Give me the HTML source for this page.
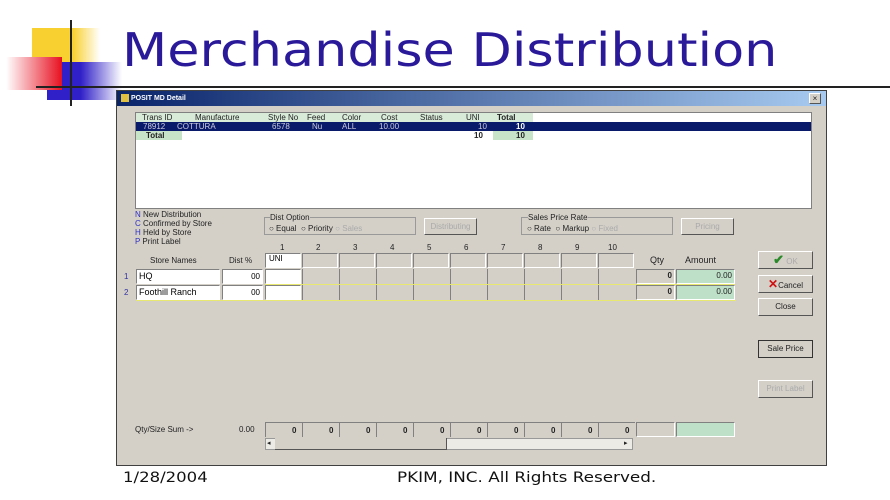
<!DOCTYPE html>
<html><head><meta charset="utf-8"><style>
*{margin:0;padding:0;box-sizing:border-box}
body{width:890px;height:500px;background:#fff;position:relative;overflow:hidden;font-family:"Liberation Sans",sans-serif}
.a{position:absolute}
.t{position:absolute;font-size:8px;color:#222;white-space:nowrap;line-height:9px}
.cell{position:absolute;border-top:1px solid #808080;border-left:1px solid #808080;border-right:1px solid #fff;border-bottom:1px solid #fff;background:#d4d0c8}
.btn{position:absolute;border:1px solid #fff;border-right-color:#555;border-bottom-color:#555;background:#d4d0c8;font-size:8px;text-align:center;line-height:16px;color:#222}
.r{text-align:right;padding-right:2px;font-size:8px;line-height:12px;font-weight:bold;color:#222}
</style></head><body>
<!-- logo -->
<div class="a" style="left:32px;top:28px;width:68px;height:35px;background:linear-gradient(90deg,#f8d030 60%,#fff)"></div>
<div class="a" style="left:47px;top:62px;width:75px;height:38px;background:linear-gradient(90deg,#3020c8 45%,#fff)"></div>
<div class="a" style="left:0;top:57px;width:62px;height:33px;background:linear-gradient(270deg,#e81020,#fff 90%)"></div>
<div class="a" style="left:70px;top:20px;width:2px;height:86px;background:#222"></div>
<div class="a" style="left:36px;top:86px;width:854px;height:2px;background:#222"></div>
<div class="a" style="left:122px;top:22px;font-size:46px;color:#2a1a9a;font-family:'DejaVu Sans',sans-serif;line-height:56px;white-space:nowrap;transform:scaleX(1.14);transform-origin:0 0">Merchandise Distribution</div>
<!-- window -->
<div class="a" style="left:116px;top:90px;width:711px;height:376px;background:#d4d0c8;border:1px solid #404040"></div>
<div class="a" style="left:117px;top:91px;width:709px;height:15px;background:linear-gradient(90deg,#0a246a,#a6caf0)"></div>
<div class="a" style="left:121px;top:94px;width:8px;height:8px;background:#e0c040"></div>
<div class="t" style="left:131px;top:94px;color:#fff;font-weight:bold;font-size:7px">POSIT MD Detail</div>
<div class="btn" style="left:809px;top:93px;width:12px;height:11px;line-height:9px">×</div>
<!-- list -->
<div class="a" style="left:135px;top:112px;width:677px;height:97px;background:#fff;border:1px solid #808080"></div>
<div class="a" style="left:136px;top:113px;width:397px;height:9px;background:#d8ead8"></div>
<div class="a" style="left:136px;top:122px;width:675px;height:9px;background:#0a1a6a"></div>
<div class="a" style="left:136px;top:131px;width:46px;height:9px;background:#c8e4c8"></div>
<div class="a" style="left:493px;top:131px;width:40px;height:9px;background:#c8e4c8"></div>
<div class="t" style="left:142px;top:113px">Trans ID</div><div class="t" style="left:195px;top:113px">Manufacture</div><div class="t" style="left:268px;top:113px">Style No</div><div class="t" style="left:307px;top:113px">Feed</div><div class="t" style="left:342px;top:113px">Color</div><div class="t" style="left:381px;top:113px">Cost</div><div class="t" style="left:420px;top:113px">Status</div><div class="t" style="left:466px;top:113px">UNI</div><div class="t" style="left:497px;top:113px;font-weight:bold">Total</div>
<div class="t" style="left:143px;top:122px;color:#ccd">78912</div><div class="t" style="left:177px;top:122px;color:#ccd">COTTURA</div><div class="t" style="left:272px;top:122px;color:#ccd">6578</div><div class="t" style="left:312px;top:122px;color:#ccd">Nu</div><div class="t" style="left:342px;top:122px;color:#ccd">ALL</div><div class="t" style="left:379px;top:122px;color:#ccd">10.00</div><div class="t" style="left:478px;top:122px;color:#ccd">10</div><div class="t" style="left:516px;top:122px;color:#fff;font-weight:bold">10</div>
<div class="t" style="left:146px;top:131px;font-weight:bold">Total</div><div class="t" style="left:474px;top:131px;font-weight:bold">10</div><div class="t" style="left:516px;top:131px;font-weight:bold">10</div>
<!-- legend -->
<div class="t" style="left:135px;top:210px"><span style="color:#3030c0">N</span> New Distribution</div>
<div class="t" style="left:135px;top:219px"><span style="color:#3030c0">C</span> Confirmed by Store</div>
<div class="t" style="left:135px;top:228px"><span style="color:#3030c0">H</span> Held by Store</div>
<div class="t" style="left:135px;top:237px"><span style="color:#3030c0">P</span> Print Label</div>
<div class="a" style="left:264px;top:217px;width:152px;height:18px;border:1px solid #999"></div>
<div class="t" style="left:270px;top:213px;background:#d4d0c8">Dist Option</div>
<div class="t" style="left:269px;top:224px">○ Equal &nbsp;○ Priority <span style="color:#aaa">○ Sales</span></div>
<div class="btn" style="left:424px;top:218px;width:53px;height:17px;color:#aaa">Distributing</div>
<div class="a" style="left:521px;top:217px;width:152px;height:18px;border:1px solid #999"></div>
<div class="t" style="left:528px;top:213px;background:#d4d0c8">Sales Price Rate</div>
<div class="t" style="left:527px;top:224px">○ Rate &nbsp;○ Markup <span style="color:#aaa">○ Fixed</span></div>
<div class="btn" style="left:681px;top:218px;width:53px;height:17px;color:#aaa">Pricing</div>
<!-- grid header -->
<div class="t" style="left:150px;top:256px">Store Names</div><div class="t" style="left:229px;top:256px">Dist %</div>
<div class="t" style="left:280px;top:243px">1</div><div class="t" style="left:316px;top:243px">2</div><div class="t" style="left:353px;top:243px">3</div><div class="t" style="left:390px;top:243px">4</div><div class="t" style="left:427px;top:243px">5</div><div class="t" style="left:464px;top:243px">6</div><div class="t" style="left:501px;top:243px">7</div><div class="t" style="left:538px;top:243px">8</div><div class="t" style="left:575px;top:243px">9</div><div class="t" style="left:608px;top:243px">10</div>
<div class="t" style="left:650px;top:256px;font-size:9px">Qty</div><div class="t" style="left:685px;top:256px;font-size:9px">Amount</div>
<div class="cell" style="left:265px;top:253px;width:36px;height:15px;background:#fff;font-size:8px;padding-left:3px">UNI</div>
<div class="cell" style="left:302px;top:253px;width:36px;height:15px"></div><div class="cell" style="left:339px;top:253px;width:36px;height:15px"></div><div class="cell" style="left:376px;top:253px;width:36px;height:15px"></div><div class="cell" style="left:413px;top:253px;width:36px;height:15px"></div><div class="cell" style="left:450px;top:253px;width:36px;height:15px"></div><div class="cell" style="left:487px;top:253px;width:36px;height:15px"></div><div class="cell" style="left:524px;top:253px;width:36px;height:15px"></div><div class="cell" style="left:561px;top:253px;width:36px;height:15px"></div><div class="cell" style="left:598px;top:253px;width:36px;height:15px"></div>
<!-- rows -->
<div class="t" style="left:124px;top:272px;color:#3030a0">1</div><div class="t" style="left:124px;top:288px;color:#3030a0">2</div>
<div class="cell" style="left:136px;top:269px;width:84px;height:15px;background:#fff;font-size:9px;padding-left:2px;line-height:13px">HQ</div>
<div class="cell" style="left:222px;top:269px;width:41px;height:15px;background:#fff;font-size:8px;text-align:right;padding-right:2px;line-height:13px">00</div>
<div class="cell" style="left:136px;top:285px;width:84px;height:15px;background:#fff;font-size:9px;padding-left:2px;line-height:13px">Foothill Ranch</div>
<div class="cell" style="left:222px;top:285px;width:41px;height:15px;background:#fff;font-size:8px;text-align:right;padding-right:2px;line-height:13px">00</div>
<div class="cell" style="left:265px;top:269px;width:36px;height:15px;background:#fff"></div>
<div class="cell" style="left:265px;top:285px;width:36px;height:15px;background:#fff"></div>
<div class="a" style="left:302px;top:269px;width:333px;height:31px;background:repeating-linear-gradient(90deg,#808080 0 1px,#d4d0c8 1px 37px)"></div>
<div class="a" style="left:265px;top:284px;width:470px;height:1px;background:#e8e870"></div>
<div class="a" style="left:136px;top:300px;width:600px;height:1px;background:#e8e870"></div>
<div class="cell r" style="left:636px;top:269px;width:39px;height:15px">0</div>
<div class="cell r" style="left:636px;top:285px;width:39px;height:15px">0</div>
<div class="cell r" style="left:676px;top:269px;width:59px;height:15px;background:#bfe0c8;font-weight:normal">0.00</div>
<div class="cell r" style="left:676px;top:285px;width:59px;height:15px;background:#bfe0c8;font-weight:normal">0.00</div>
<!-- buttons -->
<div class="btn" style="left:758px;top:251px;width:55px;height:18px;color:#aaa"><span style="color:#2a8a2a;font-size:13px;font-weight:bold">✔</span> OK</div>
<div class="btn" style="left:758px;top:275px;width:55px;height:18px"><span style="color:#d01010;font-size:12px;font-weight:bold">✕</span>Cancel</div>
<div class="btn" style="left:758px;top:298px;width:55px;height:18px">Close</div>
<div class="btn" style="left:758px;top:340px;width:55px;height:18px;border:1px solid #333">Sale Price</div>
<div class="btn" style="left:758px;top:380px;width:55px;height:18px;color:#aaa">Print Label</div>
<!-- bottom -->
<div class="t" style="left:135px;top:425px">Qty/Size Sum -&gt;</div><div class="t" style="left:239px;top:425px">0.00</div>
<div class="a" style="left:265px;top:422px;width:370px;height:15px;background:repeating-linear-gradient(90deg,#808080 0 1px,#d4d0c8 1px 37px);border-top:1px solid #808080"></div>
<div class="t" style="left:265px;top:426px;font-weight:bold">
<span class="a" style="left:27px">0</span><span class="a" style="left:64px">0</span><span class="a" style="left:101px">0</span><span class="a" style="left:138px">0</span><span class="a" style="left:175px">0</span><span class="a" style="left:212px">0</span><span class="a" style="left:249px">0</span><span class="a" style="left:286px">0</span><span class="a" style="left:323px">0</span><span class="a" style="left:360px">0</span></div>
<div class="cell" style="left:636px;top:422px;width:39px;height:15px"></div>
<div class="cell" style="left:676px;top:422px;width:59px;height:15px;background:#bfe0c8"></div>
<div class="a" style="left:265px;top:438px;width:368px;height:12px;background:#ecebe6;border:1px solid #999"></div>
<div class="a" style="left:275px;top:438px;width:172px;height:12px;background:#d4d0c8;border-right:1px solid #555;border-bottom:1px solid #555"></div>
<div class="t" style="left:267px;top:439px;font-size:7px">◂</div><div class="t" style="left:624px;top:439px;font-size:7px">▸</div>
<!-- footer -->
<div class="a" style="left:123px;top:470px;font-size:14px;font-family:'DejaVu Sans',sans-serif;color:#111;white-space:nowrap;transform:scaleX(1.18);transform-origin:0 0">1/28/2004</div>
<div class="a" style="left:397px;top:470px;font-size:14px;font-family:'DejaVu Sans',sans-serif;color:#111;white-space:nowrap;transform:scaleX(1.2);transform-origin:0 0">PKIM, INC. All Rights Reserved.</div>
</body></html>
